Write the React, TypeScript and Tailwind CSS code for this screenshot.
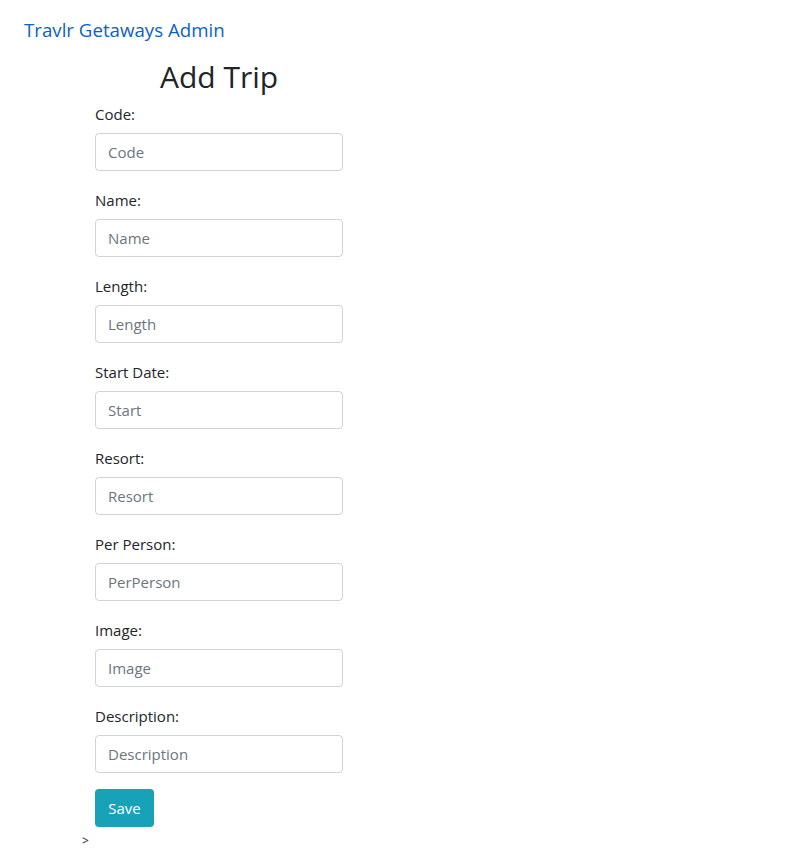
import { useState } from 'react'

const fields = [
  { label: 'Code:', placeholder: 'Code' },
  { label: 'Name:', placeholder: 'Name' },
  { label: 'Length:', placeholder: 'Length' },
  { label: 'Start Date:', placeholder: 'Start' },
  { label: 'Resort:', placeholder: 'Resort' },
  { label: 'Per Person:', placeholder: 'PerPerson' },
  { label: 'Image:', placeholder: 'Image' },
  { label: 'Description:', placeholder: 'Description' },
]

export default function App() {
  const [values, setValues] = useState<Record<string, string>>({})

  return (
    <div className="min-h-screen bg-white text-[#212529] font-['Segoe_UI','Open_Sans',sans-serif]">
      <nav className="pt-[10px] pb-2 pl-[24px]">
        <a href="#" className="inline-block py-[5px] text-[18.7px] leading-[30px] text-[#0a62c9]">
          Travlr Getaways Admin
        </a>
      </nav>

      <div className="pl-[95px]">
        <div className="w-[248px]">
          <h2 className="mb-[6px] text-center text-[30px] leading-[38px] font-normal">Add Trip</h2>
          <form onSubmit={(e) => e.preventDefault()}>
            {fields.map((f, i) => (
              <div key={f.placeholder} className={i === fields.length - 1 ? 'mb-4' : 'mb-[17px]'}>
                <label className="mb-[7px] block text-[15px] leading-[24px]">{f.label}</label>
                <input
                  type="text"
                  placeholder={f.placeholder}
                  value={values[f.placeholder] ?? ''}
                  onChange={(e) => setValues({ ...values, [f.placeholder]: e.target.value })}
                  className="block h-[38px] w-full rounded-[4px] border border-[#ced4da] px-3 text-[15px] text-[#495057] placeholder:text-[#6c757d] outline-none"
                />
              </div>
            ))}
            <button
              type="submit"
              className="h-[38px] w-[59px] rounded-[4px] bg-[#17a2b8] text-[15px] text-white"
            >
              Save
            </button>
          </form>
        </div>
      </div>
      <div className="mt-[5px] pl-[82px] text-[12px] leading-[18px]">&gt;</div>
    </div>
  )
}
